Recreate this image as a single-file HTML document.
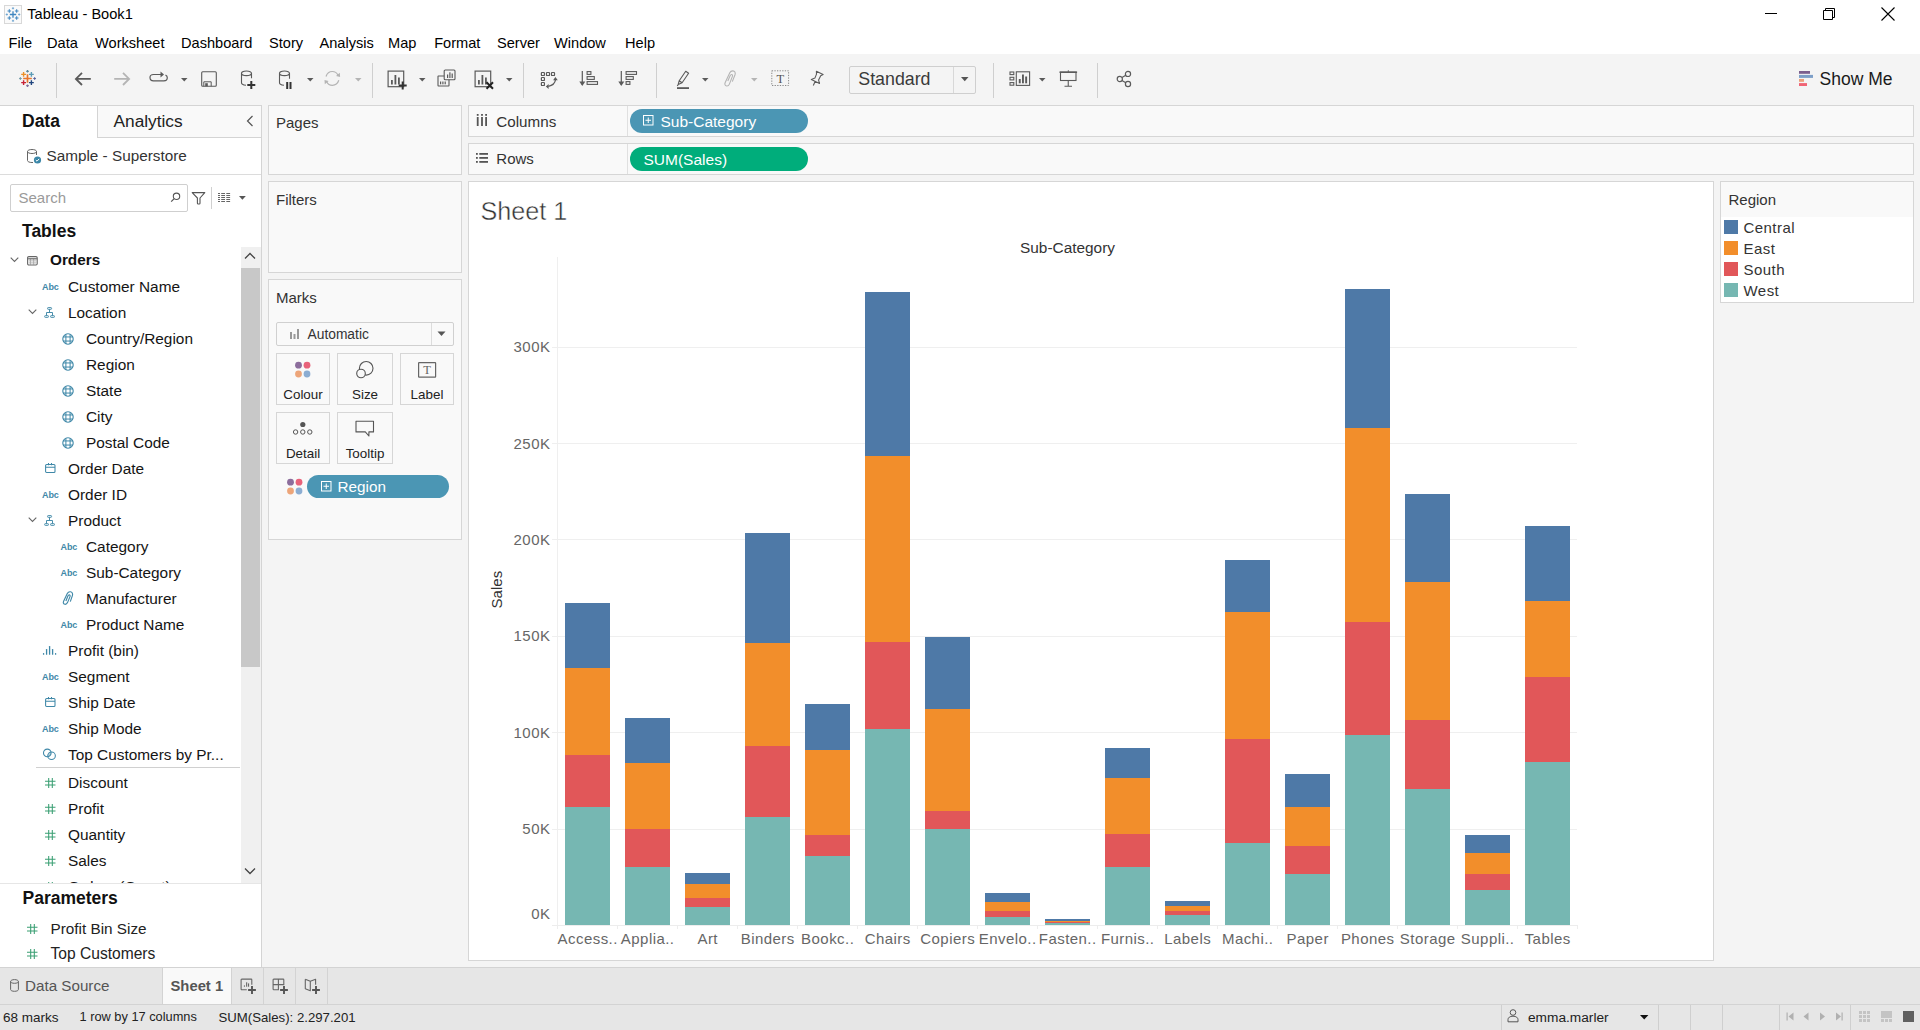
<!DOCTYPE html><html><head><meta charset="utf-8"><style>
html,body{margin:0;padding:0;}
body{width:1920px;height:1030px;overflow:hidden;position:relative;background:#f4f4f4;font-family:"Liberation Sans", sans-serif;}
.t{position:absolute;white-space:nowrap;line-height:1.15;}
.b{position:absolute;}
.s{position:absolute;overflow:visible;}

</style></head><body>
<div class="b" style="left:0px;top:0px;width:1920px;height:54px;background:#ffffff;"></div>
<svg class="s" style="left:3.5px;top:5px;" width="19" height="20" viewBox="0 0 19 20"><rect x="1" y="1" width="17" height="18" fill="#f0f0f0"/><rect x="0.5" y="0.5" width="17" height="18" fill="#fafafa" stroke="#d8d8d8"/><path d="M5.8 9.5h6.4M9 6.3v6.4" stroke="#3f86c0" stroke-width="1.3"/><path d="M3.5 6h3.6M5.3 4.2v3.6" stroke="#3f86c0" stroke-width="1"/><path d="M10.899999999999999 6h3.6M12.7 4.2v3.6" stroke="#3f86c0" stroke-width="1"/><path d="M3.5 13h3.6M5.3 11.2v3.6" stroke="#3f86c0" stroke-width="1"/><path d="M10.899999999999999 13h3.6M12.7 11.2v3.6" stroke="#3f86c0" stroke-width="1"/><path d="M7.9 3.3h2.2M9 2.1999999999999997v2.2" stroke="#6aa3cf" stroke-width="0.9"/><path d="M7.9 15.8h2.2M9 14.700000000000001v2.2" stroke="#6aa3cf" stroke-width="0.9"/><path d="M1.6999999999999997 9.5h2.2M2.8 8.4v2.2" stroke="#6aa3cf" stroke-width="0.9"/><path d="M14.1 9.5h2.2M15.2 8.4v2.2" stroke="#6aa3cf" stroke-width="0.9"/></svg>
<div class="t" style="left:27.3px;top:6.4px;font-size:14.6px;color:#000;font-weight:normal;">Tableau - Book1</div>
<div class="b" style="left:1765px;top:13px;width:12px;height:1px;background:#000;"></div>
<svg class="s" style="left:1822px;top:7px;" width="14" height="14" viewBox="0 0 14 14"><path d="M1.5 3.5h9v9h-9z M3.5 3.5v-2h9v9h-2" fill="none" stroke="#000" stroke-width="1"/></svg>
<svg class="s" style="left:1881px;top:7px;" width="14" height="14" viewBox="0 0 14 14"><path d="M0.5 0.5L13.5 13.5M13.5 0.5L0.5 13.5" stroke="#000" stroke-width="1.1"/></svg>
<div class="t" style="left:8.5px;top:34.6px;font-size:14.6px;color:#000;font-weight:normal;">File</div>
<div class="t" style="left:47px;top:34.6px;font-size:14.6px;color:#000;font-weight:normal;">Data</div>
<div class="t" style="left:95px;top:34.6px;font-size:14.6px;color:#000;font-weight:normal;">Worksheet</div>
<div class="t" style="left:181px;top:34.6px;font-size:14.6px;color:#000;font-weight:normal;">Dashboard</div>
<div class="t" style="left:269px;top:34.6px;font-size:14.6px;color:#000;font-weight:normal;">Story</div>
<div class="t" style="left:319.5px;top:34.6px;font-size:14.6px;color:#000;font-weight:normal;">Analysis</div>
<div class="t" style="left:388px;top:34.6px;font-size:14.6px;color:#000;font-weight:normal;">Map</div>
<div class="t" style="left:434.2px;top:34.6px;font-size:14.6px;color:#000;font-weight:normal;">Format</div>
<div class="t" style="left:497px;top:34.6px;font-size:14.6px;color:#000;font-weight:normal;">Server</div>
<div class="t" style="left:554px;top:34.6px;font-size:14.6px;color:#000;font-weight:normal;">Window</div>
<div class="t" style="left:625px;top:34.6px;font-size:14.6px;color:#000;font-weight:normal;">Help</div>
<div class="b" style="left:0px;top:54px;width:1920px;height:51px;background:#f4f4f4;"></div>
<svg class="s" style="left:19px;top:70px;" width="17" height="17" viewBox="0 0 17 17"><path d="M4.2 8.5h8.6M8.5 4.2v8.6" stroke="#e8762d" stroke-width="1.7"/><path d="M2.1999999999999997 4.4h4.8M4.6 2.0000000000000004v4.8" stroke="#eb912b" stroke-width="1.4"/><path d="M10.0 4.4h4.8M12.4 2.0000000000000004v4.8" stroke="#5b9bb5" stroke-width="1.4"/><path d="M2.1999999999999997 12.6h4.8M4.6 10.2v4.8" stroke="#c72035" stroke-width="1.4"/><path d="M10.0 12.6h4.8M12.4 10.2v4.8" stroke="#1f457e" stroke-width="1.4"/><path d="M7.2 1.3h2.6M8.5 0.0v2.6" stroke="#5b879b" stroke-width="1.2"/><path d="M7.2 15.7h2.6M8.5 14.399999999999999v2.6" stroke="#7e6f9a" stroke-width="1.2"/><path d="M0.09999999999999987 8.5h2.6M1.4 7.2v2.6" stroke="#7199a6" stroke-width="1.2"/><path d="M14.299999999999999 8.5h2.6M15.6 7.2v2.6" stroke="#59639b" stroke-width="1.2"/></svg>
<div class="b" style="left:56px;top:63px;width:1px;height:35px;background:#cfcfcf;"></div>
<svg class="s" style="left:74px;top:71px;" width="18" height="16" viewBox="0 0 18 16"><path d="M16.8 7.9H2.2M8 1.8L1.9 7.9L8 14" fill="none" stroke="#5a5a5a" stroke-width="1.8"/></svg>
<svg class="s" style="left:113px;top:71px;" width="18" height="16" viewBox="0 0 18 16"><path d="M1.2 7.9h14.6M10 1.8l6.1 6.1L10 14" fill="none" stroke="#b4b4b4" stroke-width="1.8"/></svg>
<svg class="s" style="left:149px;top:71px;" width="20" height="12" viewBox="0 0 20 12"><path d="M12 3.5H4.5C2.3 3.5 1 4.8 1 6.5S2.3 9.8 4.5 9.8h10.3c2.2 0 3.5-1.3 3.5-3.1 0-1.3-.8-2.2-1.8-2.7" fill="none" stroke="#5a5a5a" stroke-width="1.2"/><path d="M11.5 0.4l3.5 3.1-3.5 3.1z" fill="#5a5a5a"/></svg>
<svg class="s" style="left:180.5px;top:78px;" width="7" height="4" viewBox="0 0 7 4"><path d="M0 0h6.5l-3.25 3.6z" fill="#5a5a5a"/></svg>
<svg class="s" style="left:200px;top:70px;" width="18" height="18" viewBox="0 0 18 18"><rect x="1.7" y="1.7" width="14.6" height="14.6" rx="1" fill="none" stroke="#5a5a5a" stroke-width="1.1"/><path d="M3.8 16.3V11.8H11.2V16.3" fill="none" stroke="#5a5a5a" stroke-width="1"/><rect x="5.2" y="13.2" width="2.6" height="3.1" fill="#5a5a5a"/></svg>
<svg class="s" style="left:240px;top:70px;" width="17" height="20" viewBox="0 0 17 20"><path d="M1.5 3.3v9.5c0 1.3 1.6 2.2 4.5 2.5M1.5 3.3C1.5 2 3.4 1 6.5 1s5 1 5 2.3v5M1.5 3.3c0 1.3 1.9 2.3 5 2.3s5-1 5-2.3" fill="none" stroke="#5a5a5a" stroke-width="1.1"/><path d="M11.3 11v8M7.3 15h8" stroke="#333" stroke-width="2"/></svg>
<svg class="s" style="left:278px;top:70px;" width="16" height="20" viewBox="0 0 16 20"><path d="M1.5 3.3v9.5c0 1.3 1.6 2.2 4.5 2.5M1.5 3.3C1.5 2 3.4 1 6.5 1s5 1 5 2.3v5.5M1.5 3.3c0 1.3 1.9 2.3 5 2.3s5-1 5-2.3" fill="none" stroke="#5a5a5a" stroke-width="1.1"/><rect x="8.2" y="12" width="2" height="7" fill="#333"/><rect x="11.5" y="12" width="2" height="7" fill="#333"/></svg>
<svg class="s" style="left:306.5px;top:78px;" width="7" height="4" viewBox="0 0 7 4"><path d="M0 0h6.5l-3.25 3.6z" fill="#5a5a5a"/></svg>
<svg class="s" style="left:323px;top:70px;" width="19" height="17" viewBox="0 0 19 17"><path d="M3 6.5C4 3.5 6.3 1.5 9.3 1.5c2.6 0 4.6 1.4 5.6 3.6M15.8 10.3c-1 3-3.4 5-6.4 5-2.6 0-4.7-1.4-5.7-3.6" fill="none" stroke="#b4b4b4" stroke-width="1.2"/><path d="M16.8 2.8l.3 4.3-4.1-1z M1.8 14.2l-.3-4.3 4.1 1z" fill="#b4b4b4"/></svg>
<svg class="s" style="left:354.5px;top:78px;" width="7" height="4" viewBox="0 0 7 4"><path d="M0 0h6.5l-3.25 3.6z" fill="#b4b4b4"/></svg>
<div class="b" style="left:372px;top:63px;width:1px;height:35px;background:#cfcfcf;"></div>
<svg class="s" style="left:387px;top:70px;" width="22" height="21" viewBox="0 0 22 21"><rect x="1.1" y="1.1" width="15.6" height="15.6" fill="none" stroke="#5a5a5a" stroke-width="1.2"/><g fill="#5a5a5a"><rect x="4" y="10" width="1.8" height="4.5"/><rect x="7.5" y="5" width="1.8" height="9.5"/><rect x="11" y="7.5" width="1.8" height="7"/></g><path d="M15.7 11.5v8M11.7 15.5h8" stroke="#333" stroke-width="2"/></svg>
<svg class="s" style="left:418.5px;top:78px;" width="7" height="4" viewBox="0 0 7 4"><path d="M0 0h6.5l-3.25 3.6z" fill="#5a5a5a"/></svg>
<svg class="s" style="left:437px;top:69px;" width="20" height="19" viewBox="0 0 20 19"><rect x="7.2" y="1" width="10.8" height="9.8" fill="#f4f4f4" stroke="#5a5a5a" stroke-width="1.1" rx="1"/><g fill="#5a5a5a"><rect x="10" y="5.5" width="1.2" height="3.5"/><rect x="12.3" y="3.3" width="1.2" height="5.7"/><rect x="14.6" y="4.5" width="1.2" height="4.5"/></g><path d="M7.2 7H1.4a.5.5 0 0 0-.4.4v9.1c0 .3.2.5.4.5h10.2c.3 0 .4-.2.4-.5v-5.7" fill="none" stroke="#5a5a5a" stroke-width="1.1"/><g fill="#5a5a5a"><rect x="3" y="12.5" width="1.2" height="2.8"/><rect x="5.3" y="12.5" width="1.2" height="2.8"/><rect x="7.6" y="12.5" width="1.2" height="2.8"/></g></svg>
<svg class="s" style="left:474px;top:70px;" width="22" height="21" viewBox="0 0 22 21"><rect x="1.1" y="1.1" width="15.6" height="15.6" fill="none" stroke="#5a5a5a" stroke-width="1.2"/><g fill="#5a5a5a"><rect x="4" y="10" width="1.8" height="4.5"/><rect x="7.5" y="5" width="1.8" height="9.5"/><rect x="11" y="7.5" width="1.8" height="7"/></g><path d="M12.5 12.3l6.5 6.5M19 12.3l-6.5 6.5" stroke="#222" stroke-width="2"/></svg>
<svg class="s" style="left:505.5px;top:78px;" width="7" height="4" viewBox="0 0 7 4"><path d="M0 0h6.5l-3.25 3.6z" fill="#5a5a5a"/></svg>
<div class="b" style="left:523px;top:63px;width:1px;height:35px;background:#cfcfcf;"></div>
<svg class="s" style="left:540px;top:71px;" width="19" height="19" viewBox="0 0 19 19"><g fill="none" stroke="#5a5a5a" stroke-width="1.2"><rect x="1.40" y="1.50" width="3" height="3" rx="0.6"/><rect x="6.50" y="1.50" width="3" height="3" rx="0.6"/><rect x="11.50" y="1.50" width="3" height="3" rx="0.6"/><rect x="1.40" y="6.50" width="3" height="3" rx="0.6"/><rect x="1.40" y="11.50" width="3" height="3" rx="0.6"/><path d="M8.3 15.3C12 14.6 15 12.6 15.5 8.6"/></g><path d="M13.1 9.2L15.4 5.9 17.8 9.2z M5.9 15.5L8.6 13.1V17.9z" fill="#5a5a5a"/></svg>
<svg class="s" style="left:579px;top:70px;" width="20" height="18" viewBox="0 0 20 18"><path d="M3.3 1v14" stroke="#5a5a5a" stroke-width="1.2"/><path d="M0.3 11.5h6l-3 4.5z" fill="#5a5a5a"/><g fill="none" stroke="#5a5a5a" stroke-width="1.1"><rect x="8.1" y="1.6" width="3.8" height="2.8"/><rect x="8.1" y="6.6" width="7.2" height="2.8"/><rect x="8.1" y="11.6" width="10.4" height="2.8"/></g></svg>
<svg class="s" style="left:618px;top:70px;" width="20" height="18" viewBox="0 0 20 18"><path d="M3.3 1v14" stroke="#5a5a5a" stroke-width="1.2"/><path d="M0.3 11.5h6l-3 4.5z" fill="#5a5a5a"/><g fill="none" stroke="#5a5a5a" stroke-width="1.1"><rect x="8.1" y="1.6" width="10.4" height="2.8"/><rect x="8.1" y="6.6" width="7.2" height="2.8"/><rect x="8.1" y="11.6" width="3.8" height="2.8"/></g></svg>
<div class="b" style="left:656px;top:63px;width:1px;height:35px;background:#cfcfcf;"></div>
<svg class="s" style="left:676px;top:70px;" width="14" height="20" viewBox="0 0 14 20"><path d="M2.2 14.5l1-3.8 6.5-9.4 2.9 2-6.5 9.4z M3.2 10.7l2.9 2M1.2 16l1.2-1.6" fill="none" stroke="#5a5a5a" stroke-width="1.1" stroke-linejoin="round"/><rect x="1" y="17.2" width="12" height="1.8" fill="#5a5a5a"/></svg>
<svg class="s" style="left:701.5px;top:78px;" width="7" height="4" viewBox="0 0 7 4"><path d="M0 0h6.5l-3.25 3.6z" fill="#5a5a5a"/></svg>
<svg class="s" style="left:722px;top:70px;" width="15" height="17" viewBox="0 0 15 17"><path d="M10.3 11.6L13 4.8C13.8 2.6 12.6 1 10.9.9 9.4.8 8.4 1.6 7.8 2.8L3.2 12.4C2.3 14.3 3.2 15.9 4.7 16 6.1 16.1 6.9 15.3 7.4 14.1L10.4 6.4C10.8 5.3 10.3 4.5 9.6 4.5 8.9 4.5 8.5 5 8.1 5.8L5.8 11" fill="none" stroke="#b4b4b4" stroke-width="1.1"/></svg>
<svg class="s" style="left:750.5px;top:78px;" width="7" height="4" viewBox="0 0 7 4"><path d="M0 0h6.5l-3.25 3.6z" fill="#b4b4b4"/></svg>
<svg class="s" style="left:771px;top:70px;" width="19" height="17" viewBox="0 0 19 17"><rect x="0.8" y="0.8" width="16.8" height="14.7" fill="none" stroke="#8a8a8a" stroke-width="1" stroke-dasharray="1.3 1.3"/><text x="9.3" y="12.6" font-family="Liberation Serif" font-size="12.5" fill="#555" text-anchor="middle">T</text></svg>
<svg class="s" style="left:810px;top:70px;" width="15" height="17" viewBox="0 0 15 17"><path d="M6.4 1.2L13.1 4.5 10.7 5.8 8.6 10.1 9.5 13.4 1.3 9.4 4.9 8.1 6.5 4.1z M5.1 11.4L3.3 15.4" fill="none" stroke="#5a5a5a" stroke-width="1.1" stroke-linejoin="round"/></svg>
<div class="b" style="left:849px;top:66px;width:127px;height:28px;background:#f4f4f4;border:1px solid #cfcfcf;box-sizing:border-box;border-radius:2px;"></div>
<div class="b" style="left:953px;top:67px;width:1px;height:26px;background:#d8d8d8;"></div>
<svg class="s" style="left:961px;top:77px;" width="8" height="5" viewBox="0 0 8 5"><path d="M0 0h7.5l-3.75 4.2z" fill="#555"/></svg>
<div class="t" style="left:858.3px;top:69.0px;font-size:17.8px;color:#3a3a3a;font-weight:normal;">Standard</div>
<div class="b" style="left:993px;top:63px;width:1px;height:35px;background:#cfcfcf;"></div>
<svg class="s" style="left:1009px;top:71px;" width="22" height="16" viewBox="0 0 22 16"><g fill="none" stroke="#5a5a5a" stroke-width="1.1"><rect x="1" y="1" width="3.8" height="2.6"/><rect x="1" y="6.3" width="3.8" height="2.6"/><rect x="1" y="11.6" width="3.8" height="2.6"/><rect x="7.3" y="0.8" width="13.3" height="13.6"/></g><g fill="#5a5a5a"><rect x="9.8" y="8" width="1.9" height="4.3"/><rect x="13" y="3.5" width="1.9" height="8.8"/><rect x="16.2" y="5.5" width="1.9" height="6.8"/></g></svg>
<svg class="s" style="left:1038.5px;top:78px;" width="7" height="4" viewBox="0 0 7 4"><path d="M0 0h6.5l-3.25 3.6z" fill="#5a5a5a"/></svg>
<svg class="s" style="left:1059px;top:70px;" width="19" height="18" viewBox="0 0 19 18"><path d="M0.5 2.2h17.6" stroke="#5a5a5a" stroke-width="1.5"/><path d="M9.3 0.3v1.5" stroke="#5a5a5a" stroke-width="1"/><rect x="1.5" y="2.2" width="15.5" height="8.3" fill="none" stroke="#5a5a5a" stroke-width="1.1"/><path d="M9.25 10.5v5.5M5.5 16.2h7.5" stroke="#5a5a5a" stroke-width="1.1"/></svg>
<div class="b" style="left:1097px;top:63px;width:1px;height:35px;background:#cfcfcf;"></div>
<svg class="s" style="left:1116px;top:70px;" width="17" height="18" viewBox="0 0 17 18"><g fill="none" stroke="#5a5a5a" stroke-width="1.2"><circle cx="3.8" cy="9" r="2.6"/><circle cx="12" cy="3.9" r="2.6"/><circle cx="12" cy="14" r="2.6"/><path d="M6 7.6l3.8-2.3M6 10.4l3.8 2.3"/></g></svg>
<svg class="s" style="left:1799px;top:71px;" width="15" height="16" viewBox="0 0 15 16"><rect x="0" y="0" width="11" height="2.8" fill="#7b5f8e"/><rect x="0" y="3.9" width="14" height="3" fill="#7d9fc8"/><rect x="0" y="8" width="5" height="2.8" fill="#eba07a"/><rect x="0" y="12.1" width="8" height="2.9" fill="#f06475"/></svg>
<div class="t" style="left:1819.5px;top:68.9px;font-size:17.5px;color:#1a1a1a;font-weight:normal;">Show Me</div>
<div class="b" style="left:0px;top:105px;width:262px;height:862px;background:#ffffff;"></div>
<div class="b" style="left:261px;top:105px;width:1px;height:862px;background:#d4d4d4;"></div>
<div class="b" style="left:97px;top:105px;width:164px;height:33px;background:#f9f9f9;"></div>
<div class="b" style="left:97px;top:105px;width:1px;height:33px;background:#d4d4d4;"></div>
<div class="b" style="left:97px;top:137px;width:164px;height:1px;background:#d4d4d4;"></div>
<div class="b" style="left:0px;top:105px;width:262px;height:1px;background:#d4d4d4;"></div>
<div class="t" style="left:22px;top:110.9px;font-size:17.5px;color:#111;font-weight:bold;">Data</div>
<div class="t" style="left:113.5px;top:111.6px;font-size:17.3px;color:#222;font-weight:normal;">Analytics</div>
<svg class="s" style="left:246px;top:115px;" width="8" height="12" viewBox="0 0 8 12"><path d="M6.5 1L1.5 6L6.5 11" fill="none" stroke="#555" stroke-width="1.2"/></svg>
<svg class="s" style="left:26px;top:148px;" width="16" height="16" viewBox="0 0 16 16"><path d="M1.5 3.5v9c0 1.2 2 2 4.5 2h1M1.5 3.5c0-1.2 2-2 4.5-2s4.5 .8 4.5 2v3.5M1.5 3.5c0 1.2 2 2 4.5 2s4.5-.8 4.5-2" fill="none" stroke="#666" stroke-width="1"/><circle cx="11.5" cy="12" r="3.6" fill="#3b87a8"/><path d="M9.8 12l1.2 1.2 2.1-2.3" fill="none" stroke="#fff" stroke-width="1"/></svg>
<div class="t" style="left:46.5px;top:146.7px;font-size:15.3px;color:#333;font-weight:normal;">Sample - Superstore</div>
<div class="b" style="left:0px;top:174px;width:261px;height:1px;background:#dcdcdc;"></div>
<div class="b" style="left:10px;top:184px;width:178px;height:28px;background:#ffffff;border:1px solid #cfcfcf;box-sizing:border-box;border-radius:2px;"></div>
<div class="t" style="left:18.5px;top:189.4px;font-size:15px;color:#9a9a9a;font-weight:normal;">Search</div>
<svg class="s" style="left:168px;top:190px;" width="14" height="14" viewBox="0 0 14 14"><circle cx="8.5" cy="6.3" r="3.2" fill="none" stroke="#555" stroke-width="1.1"/><path d="M6.2 8.6L3.2 11.7" stroke="#555" stroke-width="1.2"/></svg>
<svg class="s" style="left:191px;top:191px;" width="15" height="15" viewBox="0 0 15 15"><path d="M1.2 1.6h12.6l-4.8 5.4v5.2c0 .5-.4.8-.8.8h-.9c-.5 0-.9-.3-.9-.8V7z" fill="none" stroke="#555" stroke-width="1.1" stroke-linejoin="round"/></svg>
<div class="b" style="left:211px;top:187px;width:1px;height:22px;background:#d0d0d0;"></div>
<svg class="s" style="left:218px;top:193px;" width="13" height="10" viewBox="0 0 13 10"><g fill="#555"><rect x="0" y="0.00" width="2" height="0.9"/><rect x="3.2" y="0.00" width="3.8" height="0.9"/><rect x="8.3" y="0.00" width="3.8" height="0.9"/><rect x="0" y="2.02" width="2" height="0.9"/><rect x="3.2" y="2.02" width="3.8" height="0.9"/><rect x="8.3" y="2.02" width="3.8" height="0.9"/><rect x="0" y="4.04" width="2" height="0.9"/><rect x="3.2" y="4.04" width="3.8" height="0.9"/><rect x="8.3" y="4.04" width="3.8" height="0.9"/><rect x="0" y="6.06" width="2" height="0.9"/><rect x="3.2" y="6.06" width="3.8" height="0.9"/><rect x="8.3" y="6.06" width="3.8" height="0.9"/><rect x="0" y="8.08" width="2" height="0.9"/><rect x="3.2" y="8.08" width="3.8" height="0.9"/><rect x="8.3" y="8.08" width="3.8" height="0.9"/></g></svg>
<svg class="s" style="left:239px;top:196px;" width="8" height="5" viewBox="0 0 8 5"><path d="M0 0h6.8l-3.4 3.8z" fill="#555"/></svg>
<div class="t" style="left:22px;top:220.9px;font-size:17.5px;color:#111;font-weight:bold;">Tables</div>
<div class="b" style="left:241px;top:247px;width:20px;height:636px;background:#f0f0f0;"></div>
<div class="b" style="left:241px;top:268px;width:19px;height:399px;background:#c8c8c8;"></div>
<svg class="s" style="left:244px;top:252px;" width="12" height="8" viewBox="0 0 12 8"><path d="M1 6.5L6 1.5L11 6.5" fill="none" stroke="#444" stroke-width="1.3"/></svg>
<svg class="s" style="left:244px;top:867px;" width="12" height="8" viewBox="0 0 12 8"><path d="M1 1.5L6 6.5L11 1.5" fill="none" stroke="#444" stroke-width="1.3"/></svg>
<svg class="s" style="left:10px;top:257px;" width="9" height="6" viewBox="0 0 9 6"><path d="M0.7 0.7L4.5 4.5L8.3 0.7" fill="none" stroke="#666" stroke-width="1.1"/></svg>
<svg class="s" style="left:27px;top:255.5px;" width="11" height="10" viewBox="0 0 11 10"><path d="M1.8 2.8H9.2M1.8 4.9H9.2M1.8 6.9H9.2M3.5 2.8V8.5M6.6 2.8V8.5" stroke="#aaa" stroke-width="0.9"/><rect x="0.6" y="0.6" width="9.6" height="8.4" rx="1.2" fill="none" stroke="#666" stroke-width="1.1"/><path d="M0.6 2.8H10.2" stroke="#666" stroke-width="1"/></svg>
<div class="t" style="left:50px;top:251.2px;font-size:15.3px;color:#111;font-weight:bold;">Orders</div>
<div class="t" style="left:42px;top:282.2px;font-size:9px;font-weight:bold;color:#3f88a8;letter-spacing:-0.1px">Abc</div>
<div class="t" style="left:68px;top:277.6px;font-size:15.4px;color:#151515;font-weight:normal;">Customer Name</div>
<svg class="s" style="left:44px;top:306px;" width="12" height="13" viewBox="0 0 12 13"><g fill="none" stroke="#3f88a8" stroke-width="0.95"><rect x="3.55" y="1.6" width="4" height="1.7" rx="0.6"/><rect x="0.65" y="9.65" width="3.8" height="1.7" rx="0.6"/><rect x="6.55" y="9.65" width="3.9" height="1.7" rx="0.6"/><path d="M5.5 3.3v3.2M2.5 9.6V6.5H8.5V9.6"/></g></svg>
<svg class="s" style="left:27.7px;top:309.2px;" width="9" height="6" viewBox="0 0 9 6"><path d="M0.7 0.7L4.5 4.5L8.3 0.7" fill="none" stroke="#666" stroke-width="1.1"/></svg>
<div class="t" style="left:68px;top:303.6px;font-size:15.4px;color:#151515;font-weight:normal;">Location</div>
<svg class="s" style="left:61.8px;top:332.5px;" width="12" height="12" viewBox="0 0 12 12"><defs><clipPath id="gc"><circle cx="6" cy="6" r="5.4"/></clipPath></defs><circle cx="6" cy="6" r="5.2" fill="none" stroke="#3f88a8" stroke-width="1.1"/><g clip-path="url(#gc)" stroke="#3f88a8" stroke-width="1"><path d="M3.9 0v12M8.1 0v12M0 3.95h12M0 8.05h12"/></g></svg>
<div class="t" style="left:86px;top:329.6px;font-size:15.4px;color:#151515;font-weight:normal;">Country/Region</div>
<svg class="s" style="left:61.8px;top:358.5px;" width="12" height="12" viewBox="0 0 12 12"><defs><clipPath id="gc"><circle cx="6" cy="6" r="5.4"/></clipPath></defs><circle cx="6" cy="6" r="5.2" fill="none" stroke="#3f88a8" stroke-width="1.1"/><g clip-path="url(#gc)" stroke="#3f88a8" stroke-width="1"><path d="M3.9 0v12M8.1 0v12M0 3.95h12M0 8.05h12"/></g></svg>
<div class="t" style="left:86px;top:355.6px;font-size:15.4px;color:#151515;font-weight:normal;">Region</div>
<svg class="s" style="left:61.8px;top:384.5px;" width="12" height="12" viewBox="0 0 12 12"><defs><clipPath id="gc"><circle cx="6" cy="6" r="5.4"/></clipPath></defs><circle cx="6" cy="6" r="5.2" fill="none" stroke="#3f88a8" stroke-width="1.1"/><g clip-path="url(#gc)" stroke="#3f88a8" stroke-width="1"><path d="M3.9 0v12M8.1 0v12M0 3.95h12M0 8.05h12"/></g></svg>
<div class="t" style="left:86px;top:381.6px;font-size:15.4px;color:#151515;font-weight:normal;">State</div>
<svg class="s" style="left:61.8px;top:410.5px;" width="12" height="12" viewBox="0 0 12 12"><defs><clipPath id="gc"><circle cx="6" cy="6" r="5.4"/></clipPath></defs><circle cx="6" cy="6" r="5.2" fill="none" stroke="#3f88a8" stroke-width="1.1"/><g clip-path="url(#gc)" stroke="#3f88a8" stroke-width="1"><path d="M3.9 0v12M8.1 0v12M0 3.95h12M0 8.05h12"/></g></svg>
<div class="t" style="left:86px;top:407.6px;font-size:15.4px;color:#151515;font-weight:normal;">City</div>
<svg class="s" style="left:61.8px;top:436.5px;" width="12" height="12" viewBox="0 0 12 12"><defs><clipPath id="gc"><circle cx="6" cy="6" r="5.4"/></clipPath></defs><circle cx="6" cy="6" r="5.2" fill="none" stroke="#3f88a8" stroke-width="1.1"/><g clip-path="url(#gc)" stroke="#3f88a8" stroke-width="1"><path d="M3.9 0v12M8.1 0v12M0 3.95h12M0 8.05h12"/></g></svg>
<div class="t" style="left:86px;top:433.6px;font-size:15.4px;color:#151515;font-weight:normal;">Postal Code</div>
<svg class="s" style="left:44px;top:462px;" width="12" height="12" viewBox="0 0 12 12"><g fill="none" stroke="#3f88a8" stroke-width="1.05"><rect x="1.6" y="2.5" width="9.4" height="7.9" rx="1"/><path d="M1.6 5.3h9.4M4.5 1v2.2M7.5 1v2.2"/></g></svg>
<div class="t" style="left:68px;top:459.6px;font-size:15.4px;color:#151515;font-weight:normal;">Order Date</div>
<div class="t" style="left:42px;top:490.2px;font-size:9px;font-weight:bold;color:#3f88a8;letter-spacing:-0.1px">Abc</div>
<div class="t" style="left:68px;top:485.6px;font-size:15.4px;color:#151515;font-weight:normal;">Order ID</div>
<svg class="s" style="left:44px;top:514px;" width="12" height="13" viewBox="0 0 12 13"><g fill="none" stroke="#3f88a8" stroke-width="0.95"><rect x="3.55" y="1.6" width="4" height="1.7" rx="0.6"/><rect x="0.65" y="9.65" width="3.8" height="1.7" rx="0.6"/><rect x="6.55" y="9.65" width="3.9" height="1.7" rx="0.6"/><path d="M5.5 3.3v3.2M2.5 9.6V6.5H8.5V9.6"/></g></svg>
<svg class="s" style="left:27.7px;top:517.2px;" width="9" height="6" viewBox="0 0 9 6"><path d="M0.7 0.7L4.5 4.5L8.3 0.7" fill="none" stroke="#666" stroke-width="1.1"/></svg>
<div class="t" style="left:68px;top:511.6px;font-size:15.4px;color:#151515;font-weight:normal;">Product</div>
<div class="t" style="left:60.5px;top:542.2px;font-size:9px;font-weight:bold;color:#3f88a8;letter-spacing:-0.1px">Abc</div>
<div class="t" style="left:86px;top:537.6px;font-size:15.4px;color:#151515;font-weight:normal;">Category</div>
<div class="t" style="left:60.5px;top:568.2px;font-size:9px;font-weight:bold;color:#3f88a8;letter-spacing:-0.1px">Abc</div>
<div class="t" style="left:86px;top:563.6px;font-size:15.4px;color:#151515;font-weight:normal;">Sub-Category</div>
<svg class="s" style="left:60.8px;top:590.7px;" width="13" height="14" viewBox="0 0 13 14"><path d="M9.3 10.6L11.4 4.6C12.1 2.5 11 1 9.4.8 7.9.6 6.9 1.4 6.3 2.6L2.6 10.2C1.8 11.9 2.6 13.2 4 13.3 5.3 13.4 6 12.7 6.5 11.6L9 5.6C9.4 4.6 9 3.9 8.3 3.9 7.6 3.9 7.2 4.4 6.9 5.1L4.9 10" fill="none" stroke="#3f88a8" stroke-width="1.15"/></svg>
<div class="t" style="left:86px;top:589.6px;font-size:15.4px;color:#151515;font-weight:normal;">Manufacturer</div>
<div class="t" style="left:60.5px;top:620.2px;font-size:9px;font-weight:bold;color:#3f88a8;letter-spacing:-0.1px">Abc</div>
<div class="t" style="left:86px;top:615.6px;font-size:15.4px;color:#151515;font-weight:normal;">Product Name</div>
<svg class="s" style="left:42px;top:645px;" width="15" height="10" viewBox="0 0 15 10"><g fill="#3f88a8"><rect x="0.92" y="8" width="1.3" height="1.8" rx="0.5"/><rect x="3.93" y="4.1" width="1.3" height="5.7" rx="0.5"/><rect x="6.95" y="1" width="1.3" height="8.8" rx="0.5"/><rect x="9.95" y="4.1" width="1.3" height="5.7" rx="0.5"/><rect x="12.95" y="8" width="1.3" height="1.8" rx="0.5"/></g></svg>
<div class="t" style="left:68px;top:641.6px;font-size:15.4px;color:#151515;font-weight:normal;">Profit (bin)</div>
<div class="t" style="left:42px;top:672.2px;font-size:9px;font-weight:bold;color:#3f88a8;letter-spacing:-0.1px">Abc</div>
<div class="t" style="left:68px;top:667.6px;font-size:15.4px;color:#151515;font-weight:normal;">Segment</div>
<svg class="s" style="left:44px;top:696px;" width="12" height="12" viewBox="0 0 12 12"><g fill="none" stroke="#3f88a8" stroke-width="1.05"><rect x="1.6" y="2.5" width="9.4" height="7.9" rx="1"/><path d="M1.6 5.3h9.4M4.5 1v2.2M7.5 1v2.2"/></g></svg>
<div class="t" style="left:68px;top:693.6px;font-size:15.4px;color:#151515;font-weight:normal;">Ship Date</div>
<div class="t" style="left:42px;top:724.2px;font-size:9px;font-weight:bold;color:#3f88a8;letter-spacing:-0.1px">Abc</div>
<div class="t" style="left:68px;top:719.6px;font-size:15.4px;color:#151515;font-weight:normal;">Ship Mode</div>
<svg class="s" style="left:43px;top:748.5px;" width="14" height="13" viewBox="0 0 14 13"><defs><clipPath id="sc"><circle cx="4.3" cy="3.9" r="3.8"/></clipPath></defs><circle cx="8.55" cy="6.75" r="3.8" fill="#b9d3de" clip-path="url(#sc)"/><g fill="none" stroke="#3f88a8" stroke-width="1.05"><circle cx="4.3" cy="3.9" r="3.8"/><circle cx="8.55" cy="6.75" r="3.8"/></g></svg>
<div class="t" style="left:68px;top:745.6px;font-size:15.4px;color:#151515;font-weight:normal;">Top Customers by Pr...</div>
<div class="b" style="left:36px;top:767px;width:204px;height:1px;background:#d0d0d0;"></div>
<svg class="s" style="left:45px;top:777.5px;" width="11" height="10" viewBox="0 0 11 10"><g stroke="#3a9f73" stroke-width="1.05"><path d="M3.7 0v10M7.3 0v10M0 3.3h10.5M0 6.9h10.5"/></g></svg>
<div class="t" style="left:68px;top:773.6px;font-size:15.4px;color:#151515;font-weight:normal;">Discount</div>
<svg class="s" style="left:45px;top:803.5px;" width="11" height="10" viewBox="0 0 11 10"><g stroke="#3a9f73" stroke-width="1.05"><path d="M3.7 0v10M7.3 0v10M0 3.3h10.5M0 6.9h10.5"/></g></svg>
<div class="t" style="left:68px;top:799.6px;font-size:15.4px;color:#151515;font-weight:normal;">Profit</div>
<svg class="s" style="left:45px;top:829.5px;" width="11" height="10" viewBox="0 0 11 10"><g stroke="#3a9f73" stroke-width="1.05"><path d="M3.7 0v10M7.3 0v10M0 3.3h10.5M0 6.9h10.5"/></g></svg>
<div class="t" style="left:68px;top:825.6px;font-size:15.4px;color:#151515;font-weight:normal;">Quantity</div>
<svg class="s" style="left:45px;top:855.5px;" width="11" height="10" viewBox="0 0 11 10"><g stroke="#3a9f73" stroke-width="1.05"><path d="M3.7 0v10M7.3 0v10M0 3.3h10.5M0 6.9h10.5"/></g></svg>
<div class="t" style="left:68px;top:851.6px;font-size:15.4px;color:#151515;font-weight:normal;">Sales</div>
<svg class="s" style="left:45px;top:881.5px;" width="11" height="10" viewBox="0 0 11 10"><g stroke="#3a9f73" stroke-width="1.05"><path d="M3.7 0v10M7.3 0v10M0 3.3h10.5M0 6.9h10.5"/></g></svg>
<div class="t" style="left:68px;top:877.6px;font-size:15.4px;color:#151515;font-weight:normal;">Orders (Count)</div>
<div class="b" style="left:0px;top:883px;width:241px;height:84px;background:#ffffff;"></div>
<div class="b" style="left:0px;top:883px;width:261px;height:1px;background:#e6e6e6;"></div>
<div class="t" style="left:22.5px;top:888.4px;font-size:17.5px;color:#111;font-weight:bold;">Parameters</div>
<svg class="s" style="left:26.5px;top:923.5px;" width="11" height="10" viewBox="0 0 11 10"><g stroke="#3a9f73" stroke-width="1.05"><path d="M3.7 0v10M7.3 0v10M0 3.3h10.5M0 6.9h10.5"/></g></svg>
<div class="t" style="left:50.5px;top:919.7px;font-size:15.3px;color:#222;font-weight:normal;">Profit Bin Size</div>
<svg class="s" style="left:26.5px;top:949px;" width="11" height="10" viewBox="0 0 11 10"><g stroke="#3a9f73" stroke-width="1.05"><path d="M3.7 0v10M7.3 0v10M0 3.3h10.5M0 6.9h10.5"/></g></svg>
<div class="t" style="left:50.5px;top:945.0px;font-size:15.6px;color:#222;font-weight:normal;">Top Customers</div>
<div class="b" style="left:268px;top:105px;width:194px;height:70px;background:#f9f9f9;border:1px solid #d6d6d6;box-sizing:border-box;"></div>
<div class="t" style="left:276px;top:114.4px;font-size:15px;color:#333;font-weight:normal;">Pages</div>
<div class="b" style="left:268px;top:181px;width:194px;height:92px;background:#f9f9f9;border:1px solid #d6d6d6;box-sizing:border-box;"></div>
<div class="t" style="left:276px;top:191.4px;font-size:15px;color:#333;font-weight:normal;">Filters</div>
<div class="b" style="left:268px;top:279px;width:194px;height:261px;background:#f9f9f9;border:1px solid #d6d6d6;box-sizing:border-box;"></div>
<div class="t" style="left:276px;top:289.4px;font-size:15px;color:#333;font-weight:normal;">Marks</div>
<div class="b" style="left:276px;top:322px;width:178px;height:24px;background:#f9f9f9;border:1px solid #d0d0d0;box-sizing:border-box;border-radius:2px;"></div>
<div class="b" style="left:431px;top:323px;width:1px;height:22px;background:#dcdcdc;"></div>
<svg class="s" style="left:437px;top:331px;" width="10" height="6" viewBox="0 0 10 6"><path d="M0.5 0.5h8l-4 4.5z" fill="#555"/></svg>
<svg class="s" style="left:289px;top:328px;" width="12" height="12" viewBox="0 0 12 12"><g fill="#999"><rect x="1" y="4" width="2" height="7"/><rect x="4.5" y="6" width="2" height="5"/><rect x="8" y="1" width="2" height="10"/></g></svg>
<div class="t" style="left:307.5px;top:327.4px;font-size:13.8px;color:#333;font-weight:normal;">Automatic</div>
<div class="b" style="left:276px;top:353px;width:54px;height:52px;background:#f9f9f9;border:1px solid #d6d6d6;box-sizing:border-box;"></div>
<div class="t" style="left:263.0px;width:80px;text-align:center;top:387.3px;font-size:13.4px;color:#222;font-weight:normal">Colour</div>
<div class="b" style="left:337px;top:353px;width:56px;height:52px;background:#f9f9f9;border:1px solid #d6d6d6;box-sizing:border-box;"></div>
<div class="t" style="left:325.0px;width:80px;text-align:center;top:387.3px;font-size:13.4px;color:#222;font-weight:normal">Size</div>
<div class="b" style="left:400px;top:353px;width:54px;height:52px;background:#f9f9f9;border:1px solid #d6d6d6;box-sizing:border-box;"></div>
<div class="t" style="left:387.0px;width:80px;text-align:center;top:387.3px;font-size:13.4px;color:#222;font-weight:normal">Label</div>
<div class="b" style="left:276px;top:412px;width:54px;height:52px;background:#f9f9f9;border:1px solid #d6d6d6;box-sizing:border-box;"></div>
<div class="t" style="left:263.0px;width:80px;text-align:center;top:446.3px;font-size:13.4px;color:#222;font-weight:normal">Detail</div>
<div class="b" style="left:337px;top:412px;width:56px;height:52px;background:#f9f9f9;border:1px solid #d6d6d6;box-sizing:border-box;"></div>
<div class="t" style="left:325.0px;width:80px;text-align:center;top:446.3px;font-size:13.4px;color:#222;font-weight:normal">Tooltip</div>
<svg class="s" style="left:295px;top:362px;" width="16" height="16" viewBox="0 0 16 16"><circle cx="3.5" cy="3.2" r="3.4" fill="#8c6d9c"/><circle cx="12" cy="3.2" r="3.4" fill="#e8627a"/><circle cx="3.5" cy="12" r="3.4" fill="#eda579"/><circle cx="12" cy="12" r="3.4" fill="#8cadd2"/></svg>
<svg class="s" style="left:355px;top:360px;" width="20" height="19" viewBox="0 0 20 19"><g fill="none" stroke="#555" stroke-width="1.1"><circle cx="11.2" cy="8.3" r="6.8"/><circle cx="6" cy="13.5" r="4.3" fill="#f9f9f9"/></g></svg>
<svg class="s" style="left:418px;top:361px;" width="19" height="17" viewBox="0 0 19 17"><rect x="0.6" y="1.6" width="17" height="14.6" fill="none" stroke="#666" stroke-width="1.2" rx="0.5"/><text x="9.1" y="13.2" font-family="Liberation Serif" font-size="12.5" fill="#666" text-anchor="middle">T</text></svg>
<svg class="s" style="left:292px;top:421px;" width="22" height="14" viewBox="0 0 22 14"><circle cx="10.8" cy="3.5" r="2.6" fill="#555"/><g fill="none" stroke="#555" stroke-width="1"><circle cx="3.6" cy="11" r="2.2"/><circle cx="10.8" cy="11" r="2.2"/><circle cx="17.8" cy="11" r="2.2"/></g></svg>
<svg class="s" style="left:355px;top:420px;" width="20" height="19" viewBox="0 0 20 19"><path d="M1 1.2H18.5V11.9H13.9V16L10.3 11.9H1z" fill="none" stroke="#555" stroke-width="1.1" stroke-linejoin="round"/></svg>
<svg class="s" style="left:287px;top:479px;" width="16" height="16" viewBox="0 0 16 16"><circle cx="3.5" cy="3.2" r="3.4" fill="#8c6d9c"/><circle cx="12" cy="3.2" r="3.4" fill="#e8627a"/><circle cx="3.5" cy="12" r="3.4" fill="#eda579"/><circle cx="12" cy="12" r="3.4" fill="#8cadd2"/></svg>
<div class="b" style="left:307px;top:475px;width:142px;height:23px;background:#4b96b4;border-radius:12px;"></div>
<svg class="s" style="left:321px;top:481px;" width="11" height="11" viewBox="0 0 11 11"><rect x="0.5" y="0.5" width="9.5" height="9.5" fill="none" stroke="#fff" stroke-width="1"/><path d="M5.25 2.5v5.5M2.5 5.25h5.5" stroke="#fff" stroke-width="1"/></svg>
<div class="t" style="left:337.5px;top:477.7px;font-size:15.3px;color:#fff;font-weight:normal;">Region</div>
<div class="b" style="left:468px;top:105px;width:1446px;height:32px;background:#f9f9f9;border:1px solid #d6d6d6;box-sizing:border-box;"></div>
<div class="b" style="left:627px;top:106px;width:1px;height:30px;background:#e0e0e0;"></div>
<div class="t" style="left:496.3px;top:112.8px;font-size:15.2px;color:#333;font-weight:normal;">Columns</div>
<svg class="s" style="left:476px;top:113px;" width="12" height="14" viewBox="0 0 12 14"><g fill="#555"><rect x="0.8" y="1" width="1.8" height="1.8"/><rect x="0.8" y="4" width="1.8" height="9"/><rect x="5.1" y="1" width="1.8" height="1.8"/><rect x="5.1" y="4" width="1.8" height="9"/><rect x="9.2" y="1" width="1.8" height="1.8"/><rect x="9.2" y="4" width="1.8" height="9"/></g></svg>
<div class="b" style="left:468px;top:143px;width:1446px;height:32px;background:#f9f9f9;border:1px solid #d6d6d6;box-sizing:border-box;"></div>
<div class="b" style="left:627px;top:144px;width:1px;height:30px;background:#e0e0e0;"></div>
<div class="t" style="left:496.3px;top:149.9px;font-size:15px;color:#333;font-weight:normal;">Rows</div>
<svg class="s" style="left:476px;top:153px;" width="13" height="11" viewBox="0 0 13 11"><g fill="#555"><rect x="0" y="0" width="1.8" height="1.8"/><rect x="3.3" y="0" width="8.7" height="1.8"/><rect x="0" y="4" width="1.8" height="1.8"/><rect x="3.3" y="4" width="8.7" height="1.8"/><rect x="0" y="8" width="1.8" height="1.8"/><rect x="3.3" y="8" width="8.7" height="1.8"/></g></svg>
<div class="b" style="left:630px;top:109px;width:178px;height:24px;background:#4b96b4;border-radius:12px;"></div>
<div class="t" style="left:660.5px;top:113.1px;font-size:15.5px;color:#fff;font-weight:normal;">Sub-Category</div>
<svg class="s" style="left:643px;top:115px;" width="11" height="11" viewBox="0 0 11 11"><rect x="0.5" y="0.5" width="9.5" height="9.5" fill="none" stroke="#fff" stroke-width="1"/><path d="M5.25 2.5v5.5M2.5 5.25h5.5" stroke="#fff" stroke-width="1"/></svg>
<div class="b" style="left:630px;top:147px;width:178px;height:24px;background:#00ad7b;border-radius:12px;"></div>
<div class="t" style="left:643.5px;top:151.1px;font-size:15.5px;color:#fff;font-weight:normal;">SUM(Sales)</div>
<div class="b" style="left:468px;top:181px;width:1246px;height:780px;background:#ffffff;border:1px solid #d6d6d6;box-sizing:border-box;"></div>
<div class="t" style="left:480.5px;top:196.5px;font-size:25.2px;color:#333;font-weight:normal;-webkit-text-stroke:0.45px #fff;paint-order:normal;">Sheet 1</div>
<div class="t" style="left:967.5px;width:200px;text-align:center;top:238.6px;font-size:15.4px;color:#333;font-weight:normal">Sub-Category</div>
<div class="t" style="left:467px;top:581px;width:60px;text-align:center;font-size:15px;color:#333;transform:rotate(-90deg);">Sales</div>
<svg class="s" style="left:0px;top:0px;" width="1920" height="1030" viewBox="0 0 1920 1030"><rect x="552" y="829" width="1025" height="1" fill="#efefef"/><rect x="552" y="732" width="1025" height="1" fill="#efefef"/><rect x="552" y="636" width="1025" height="1" fill="#efefef"/><rect x="552" y="539" width="1025" height="1" fill="#efefef"/><rect x="552" y="443" width="1025" height="1" fill="#efefef"/><rect x="552" y="347" width="1025" height="1" fill="#efefef"/><rect x="552" y="925" width="1025" height="1" fill="#ededed"/><rect x="557" y="257" width="1" height="668" fill="#efefef"/><rect x="557" y="925" width="1" height="4" fill="#ededed"/><rect x="617" y="925" width="1" height="4" fill="#ededed"/><rect x="677" y="925" width="1" height="4" fill="#ededed"/><rect x="737" y="925" width="1" height="4" fill="#ededed"/><rect x="797" y="925" width="1" height="4" fill="#ededed"/><rect x="857" y="925" width="1" height="4" fill="#ededed"/><rect x="917" y="925" width="1" height="4" fill="#ededed"/><rect x="977" y="925" width="1" height="4" fill="#ededed"/><rect x="1037" y="925" width="1" height="4" fill="#ededed"/><rect x="1097" y="925" width="1" height="4" fill="#ededed"/><rect x="1157" y="925" width="1" height="4" fill="#ededed"/><rect x="1217" y="925" width="1" height="4" fill="#ededed"/><rect x="1277" y="925" width="1" height="4" fill="#ededed"/><rect x="1337" y="925" width="1" height="4" fill="#ededed"/><rect x="1397" y="925" width="1" height="4" fill="#ededed"/><rect x="1457" y="925" width="1" height="4" fill="#ededed"/><rect x="1517" y="925" width="1" height="4" fill="#ededed"/><rect x="1577" y="925" width="1" height="4" fill="#ededed"/></svg>
<div class="t" style="left:450.4px;width:100px;text-align:right;top:905.4px;font-size:15px;color:#666;letter-spacing:0.45px">0K</div>
<div class="t" style="left:450.4px;width:100px;text-align:right;top:820.1px;font-size:15px;color:#666;letter-spacing:0.45px">50K</div>
<div class="t" style="left:450.4px;width:100px;text-align:right;top:723.7px;font-size:15px;color:#666;letter-spacing:0.45px">100K</div>
<div class="t" style="left:450.4px;width:100px;text-align:right;top:627.4px;font-size:15px;color:#666;letter-spacing:0.45px">150K</div>
<div class="t" style="left:450.4px;width:100px;text-align:right;top:531.1px;font-size:15px;color:#666;letter-spacing:0.45px">200K</div>
<div class="t" style="left:450.4px;width:100px;text-align:right;top:434.7px;font-size:15px;color:#666;letter-spacing:0.45px">250K</div>
<div class="t" style="left:450.4px;width:100px;text-align:right;top:338.4px;font-size:15px;color:#666;letter-spacing:0.45px">300K</div>
<div class="t" style="left:547.7px;width:80px;text-align:center;top:930.4px;font-size:15px;color:#666;letter-spacing:0.45px">Access..</div>
<div class="t" style="left:607.7px;width:80px;text-align:center;top:930.4px;font-size:15px;color:#666;letter-spacing:0.45px">Applia..</div>
<div class="t" style="left:667.7px;width:80px;text-align:center;top:930.4px;font-size:15px;color:#666;letter-spacing:0.45px">Art</div>
<div class="t" style="left:727.7px;width:80px;text-align:center;top:930.4px;font-size:15px;color:#666;letter-spacing:0.45px">Binders</div>
<div class="t" style="left:787.7px;width:80px;text-align:center;top:930.4px;font-size:15px;color:#666;letter-spacing:0.45px">Bookc..</div>
<div class="t" style="left:847.7px;width:80px;text-align:center;top:930.4px;font-size:15px;color:#666;letter-spacing:0.45px">Chairs</div>
<div class="t" style="left:907.7px;width:80px;text-align:center;top:930.4px;font-size:15px;color:#666;letter-spacing:0.45px">Copiers</div>
<div class="t" style="left:967.7px;width:80px;text-align:center;top:930.4px;font-size:15px;color:#666;letter-spacing:0.45px">Envelo..</div>
<div class="t" style="left:1027.7px;width:80px;text-align:center;top:930.4px;font-size:15px;color:#666;letter-spacing:0.45px">Fasten..</div>
<div class="t" style="left:1087.7px;width:80px;text-align:center;top:930.4px;font-size:15px;color:#666;letter-spacing:0.45px">Furnis..</div>
<div class="t" style="left:1147.7px;width:80px;text-align:center;top:930.4px;font-size:15px;color:#666;letter-spacing:0.45px">Labels</div>
<div class="t" style="left:1207.7px;width:80px;text-align:center;top:930.4px;font-size:15px;color:#666;letter-spacing:0.45px">Machi..</div>
<div class="t" style="left:1267.7px;width:80px;text-align:center;top:930.4px;font-size:15px;color:#666;letter-spacing:0.45px">Paper</div>
<div class="t" style="left:1327.7px;width:80px;text-align:center;top:930.4px;font-size:15px;color:#666;letter-spacing:0.45px">Phones</div>
<div class="t" style="left:1387.7px;width:80px;text-align:center;top:930.4px;font-size:15px;color:#666;letter-spacing:0.45px">Storage</div>
<div class="t" style="left:1447.7px;width:80px;text-align:center;top:930.4px;font-size:15px;color:#666;letter-spacing:0.45px">Suppli..</div>
<div class="t" style="left:1507.7px;width:80px;text-align:center;top:930.4px;font-size:15px;color:#666;letter-spacing:0.45px">Tables</div>
<svg class="s" style="left:0px;top:0px;shape-rendering:crispEdges;" width="1920" height="1030" viewBox="0 0 1920 1030"><rect x="565" y="807.25" width="45" height="117.75" fill="#76b7b2"/><rect x="565" y="754.70" width="45" height="52.55" fill="#e15759"/><rect x="565" y="667.94" width="45" height="86.76" fill="#f28e2b"/><rect x="565" y="602.51" width="45" height="65.42" fill="#4e79a7"/><rect x="625" y="866.75" width="45" height="58.25" fill="#76b7b2"/><rect x="625" y="829.13" width="45" height="37.62" fill="#e15759"/><rect x="625" y="763.26" width="45" height="65.87" fill="#f28e2b"/><rect x="625" y="717.82" width="45" height="45.43" fill="#4e79a7"/><rect x="685" y="907.25" width="45" height="17.75" fill="#76b7b2"/><rect x="685" y="898.28" width="45" height="8.97" fill="#e15759"/><rect x="685" y="883.86" width="45" height="14.42" fill="#f28e2b"/><rect x="685" y="872.75" width="45" height="11.11" fill="#4e79a7"/><rect x="745" y="817.18" width="45" height="107.82" fill="#76b7b2"/><rect x="745" y="745.84" width="45" height="71.34" fill="#e15759"/><rect x="745" y="642.76" width="45" height="103.07" fill="#f28e2b"/><rect x="745" y="533.09" width="45" height="109.67" fill="#4e79a7"/><rect x="805" y="855.63" width="45" height="69.37" fill="#76b7b2"/><rect x="805" y="834.63" width="45" height="21.00" fill="#e15759"/><rect x="805" y="750.21" width="45" height="84.42" fill="#f28e2b"/><rect x="805" y="703.67" width="45" height="46.54" fill="#4e79a7"/><rect x="865" y="728.90" width="45" height="196.10" fill="#76b7b2"/><rect x="865" y="641.86" width="45" height="87.04" fill="#e15759"/><rect x="865" y="456.43" width="45" height="185.44" fill="#f28e2b"/><rect x="865" y="292.22" width="45" height="164.21" fill="#4e79a7"/><rect x="925" y="829.15" width="45" height="95.85" fill="#76b7b2"/><rect x="925" y="811.23" width="45" height="17.92" fill="#e15759"/><rect x="925" y="708.70" width="45" height="102.54" fill="#f28e2b"/><rect x="925" y="636.91" width="45" height="71.79" fill="#4e79a7"/><rect x="985" y="917.07" width="45" height="7.93" fill="#76b7b2"/><rect x="985" y="910.62" width="45" height="6.45" fill="#e15759"/><rect x="985" y="902.19" width="45" height="8.43" fill="#f28e2b"/><rect x="985" y="893.25" width="45" height="8.93" fill="#4e79a7"/><rect x="1045" y="923.22" width="45" height="1.78" fill="#76b7b2"/><rect x="1045" y="922.25" width="45" height="0.97" fill="#e15759"/><rect x="1045" y="920.67" width="45" height="1.58" fill="#f28e2b"/><rect x="1045" y="919.17" width="45" height="1.50" fill="#4e79a7"/><rect x="1105" y="867.06" width="45" height="57.94" fill="#76b7b2"/><rect x="1105" y="833.71" width="45" height="33.34" fill="#e15759"/><rect x="1105" y="777.70" width="45" height="56.01" fill="#f28e2b"/><rect x="1105" y="748.32" width="45" height="29.39" fill="#4e79a7"/><rect x="1165" y="915.21" width="45" height="9.79" fill="#76b7b2"/><rect x="1165" y="910.68" width="45" height="4.53" fill="#e15759"/><rect x="1165" y="905.67" width="45" height="5.02" fill="#f28e2b"/><rect x="1165" y="900.94" width="45" height="4.72" fill="#4e79a7"/><rect x="1225" y="843.22" width="45" height="81.78" fill="#76b7b2"/><rect x="1225" y="739.39" width="45" height="103.83" fill="#e15759"/><rect x="1225" y="612.03" width="45" height="127.36" fill="#f28e2b"/><rect x="1225" y="560.40" width="45" height="51.63" fill="#4e79a7"/><rect x="1285" y="873.63" width="45" height="51.37" fill="#76b7b2"/><rect x="1285" y="846.36" width="45" height="27.26" fill="#e15759"/><rect x="1285" y="806.53" width="45" height="39.83" fill="#f28e2b"/><rect x="1285" y="773.80" width="45" height="32.74" fill="#4e79a7"/><rect x="1345" y="734.87" width="45" height="190.13" fill="#76b7b2"/><rect x="1345" y="621.57" width="45" height="113.30" fill="#e15759"/><rect x="1345" y="427.72" width="45" height="193.85" fill="#f28e2b"/><rect x="1345" y="289.19" width="45" height="138.53" fill="#4e79a7"/><rect x="1405" y="789.11" width="45" height="135.89" fill="#76b7b2"/><rect x="1405" y="720.19" width="45" height="68.91" fill="#e15759"/><rect x="1405" y="582.22" width="45" height="137.97" fill="#f28e2b"/><rect x="1405" y="493.73" width="45" height="88.49" fill="#4e79a7"/><rect x="1465" y="889.93" width="45" height="35.07" fill="#76b7b2"/><rect x="1465" y="873.90" width="45" height="16.03" fill="#e15759"/><rect x="1465" y="853.00" width="45" height="20.90" fill="#f28e2b"/><rect x="1465" y="835.08" width="45" height="17.92" fill="#4e79a7"/><rect x="1525" y="761.71" width="45" height="163.29" fill="#76b7b2"/><rect x="1525" y="677.09" width="45" height="84.61" fill="#e15759"/><rect x="1525" y="600.72" width="45" height="76.37" fill="#f28e2b"/><rect x="1525" y="526.25" width="45" height="74.47" fill="#4e79a7"/></svg>
<div class="b" style="left:1720px;top:181px;width:194px;height:122px;background:#ffffff;border:1px solid #d6d6d6;box-sizing:border-box;"></div>
<div class="b" style="left:1721px;top:182px;width:192px;height:35px;background:#f9f9f9;"></div>
<div class="t" style="left:1728.5px;top:191.4px;font-size:15px;color:#333;font-weight:normal;">Region</div>
<div class="b" style="left:1724px;top:220px;width:14px;height:14px;background:#4e79a7;"></div>
<div class="t" style="left:1743.5px;top:219.4px;font-size:15px;color:#333;font-weight:normal;letter-spacing:0.45px;">Central</div>
<div class="b" style="left:1724px;top:241px;width:14px;height:14px;background:#f28e2b;"></div>
<div class="t" style="left:1743.5px;top:240.4px;font-size:15px;color:#333;font-weight:normal;letter-spacing:0.45px;">East</div>
<div class="b" style="left:1724px;top:262px;width:14px;height:14px;background:#e15759;"></div>
<div class="t" style="left:1743.5px;top:261.4px;font-size:15px;color:#333;font-weight:normal;letter-spacing:0.45px;">South</div>
<div class="b" style="left:1724px;top:283px;width:14px;height:14px;background:#76b7b2;"></div>
<div class="t" style="left:1743.5px;top:282.4px;font-size:15px;color:#333;font-weight:normal;letter-spacing:0.45px;">West</div>
<div class="b" style="left:0px;top:967px;width:1920px;height:63px;background:#e6e6e6;"></div>
<div class="b" style="left:0px;top:967px;width:1920px;height:1px;background:#d3d3d3;"></div>
<div class="b" style="left:0px;top:1004px;width:1920px;height:1px;background:#d3d3d3;"></div>
<svg class="s" style="left:10px;top:979px;" width="9" height="13" viewBox="0 0 9 13"><path d="M0.6 2.5v8c0 1 1.5 1.8 3.9 1.8s3.9-.8 3.9-1.8v-8M0.6 2.5C.6 1.5 2.1.6 4.5.6s3.9.9 3.9 1.9S6.9 4.3 4.5 4.3.6 3.5.6 2.5" fill="none" stroke="#666" stroke-width="1"/></svg>
<div class="t" style="left:25px;top:977.3px;font-size:15.2px;color:#555;font-weight:normal;">Data Source</div>
<div class="b" style="left:162px;top:968px;width:70px;height:36px;background:#f9f9f9;"></div>
<div class="b" style="left:162px;top:968px;width:1px;height:36px;background:#d3d3d3;"></div>
<div class="b" style="left:231px;top:968px;width:1px;height:36px;background:#d3d3d3;"></div>
<div class="t" style="left:170.5px;top:977.8px;font-size:14.8px;color:#555;font-weight:bold;">Sheet 1</div>
<div class="b" style="left:263px;top:968px;width:1px;height:36px;background:#d3d3d3;"></div>
<div class="b" style="left:295px;top:968px;width:1px;height:36px;background:#d3d3d3;"></div>
<div class="b" style="left:327px;top:968px;width:1px;height:36px;background:#d3d3d3;"></div>
<svg class="s" style="left:240px;top:978px;" width="17" height="17" viewBox="0 0 17 17"><path d="M6.8 11.8H1.8Q1.1 11.8 1.1 11.1V1.8Q1.1 1.1 1.8 1.1H11.1Q11.8 1.1 11.8 1.8V6.8" fill="none" stroke="#666" stroke-width="1.1"/><g fill="#666"><rect x="3.9" y="7.4" width="1.1" height="1.3"/><rect x="6.1" y="4.3" width="1.1" height="4.4"/><rect x="8" y="5.4" width="1.1" height="3.3"/></g><path d="M12 8.1V15.9M8.1 12H15.9" stroke="#555" stroke-width="1.9"/></svg>
<svg class="s" style="left:272px;top:978px;" width="17" height="17" viewBox="0 0 17 17"><path d="M1.1 6.6V1.8Q1.1 1.1 1.8 1.1H11.1Q11.8 1.1 11.8 1.8V6.6H1.1V11.1Q1.1 11.8 1.8 11.8H6.4V1.1" fill="none" stroke="#666" stroke-width="1.1"/><path d="M12 8.1V15.9M8.1 12H15.9" stroke="#555" stroke-width="1.9"/></svg>
<svg class="s" style="left:304px;top:978px;" width="17" height="17" viewBox="0 0 17 17"><path d="M1.3 1.3L6.3 3.3L11.6 1.3V6.8M1.3 1.3V10.7L6.3 12.7V3.3" fill="none" stroke="#666" stroke-width="1.1" stroke-linejoin="round"/><path d="M12 8.1V15.9M8.1 12H15.9" stroke="#555" stroke-width="1.9"/></svg>
<div class="t" style="left:3px;top:1009.7px;font-size:13.5px;color:#222;font-weight:normal;">68 marks</div>
<div class="t" style="left:79.5px;top:1010.1px;font-size:12.8px;color:#222;font-weight:normal;">1 row by 17 columns</div>
<div class="t" style="left:218.5px;top:1009.9px;font-size:13.2px;color:#222;font-weight:normal;">SUM(Sales): 2.297.201</div>
<div class="b" style="left:1501px;top:1005px;width:1px;height:25px;background:#cfcfcf;"></div>
<div class="b" style="left:1658px;top:1005px;width:1px;height:25px;background:#cfcfcf;"></div>
<div class="b" style="left:1690px;top:1005px;width:1px;height:25px;background:#cfcfcf;"></div>
<div class="b" style="left:1722px;top:1005px;width:1px;height:25px;background:#cfcfcf;"></div>
<div class="b" style="left:1779px;top:1005px;width:1px;height:25px;background:#cfcfcf;"></div>
<div class="b" style="left:1850px;top:1005px;width:1px;height:25px;background:#cfcfcf;"></div>
<svg class="s" style="left:1507px;top:1009px;" width="12" height="14" viewBox="0 0 12 14"><g fill="none" stroke="#555" stroke-width="1"><circle cx="6" cy="3.5" r="2.8"/><path d="M1 12.8v-2.3c0-1.8 1.8-3.3 5-3.3s5 1.5 5 3.3v2.3z"/></g></svg>
<div class="t" style="left:1528px;top:1009.6px;font-size:13.7px;color:#222;font-weight:normal;">emma.marler</div>
<svg class="s" style="left:1640px;top:1015px;" width="9" height="6" viewBox="0 0 9 6"><path d="M0 0h8.4l-4.2 4.6z" fill="#111"/></svg>
<svg class="s" style="left:1786px;top:1012px;" width="60" height="10" viewBox="0 0 60 10"><g fill="#b0b0b0"><rect x="0.5" y="0.5" width="1.2" height="8"/><path d="M7.5 0.5v8l-5-4z"/><path d="M22.5 0.5v8l-5-4z"/><path d="M34 0.5v8l5-4z"/><path d="M50 0.5v8l5-4z"/><rect x="55.5" y="0.5" width="1.2" height="8"/></g></svg>
<svg class="s" style="left:1859px;top:1011px;" width="11" height="11" viewBox="0 0 11 11"><g fill="#c4c4c4"><rect x="0" y="0" width="3" height="3"/><rect x="4" y="0" width="3" height="3"/><rect x="8" y="0" width="3" height="3"/><rect x="0" y="4" width="3" height="3"/><rect x="4" y="4" width="3" height="3"/><rect x="8" y="4" width="3" height="3"/><rect x="0" y="8" width="3" height="3"/><rect x="4" y="8" width="3" height="3"/><rect x="8" y="8" width="3" height="3"/></g></svg>
<svg class="s" style="left:1881px;top:1011px;" width="11" height="11" viewBox="0 0 11 11"><g fill="#c4c4c4"><rect x="0" y="0" width="11" height="7"/><rect x="0" y="8" width="3" height="3"/><rect x="4" y="8" width="3" height="3"/><rect x="8" y="8" width="3" height="3"/></g></svg>
<div class="b" style="left:1903px;top:1011px;width:11px;height:11px;background:#606060;"></div>
</body></html>
